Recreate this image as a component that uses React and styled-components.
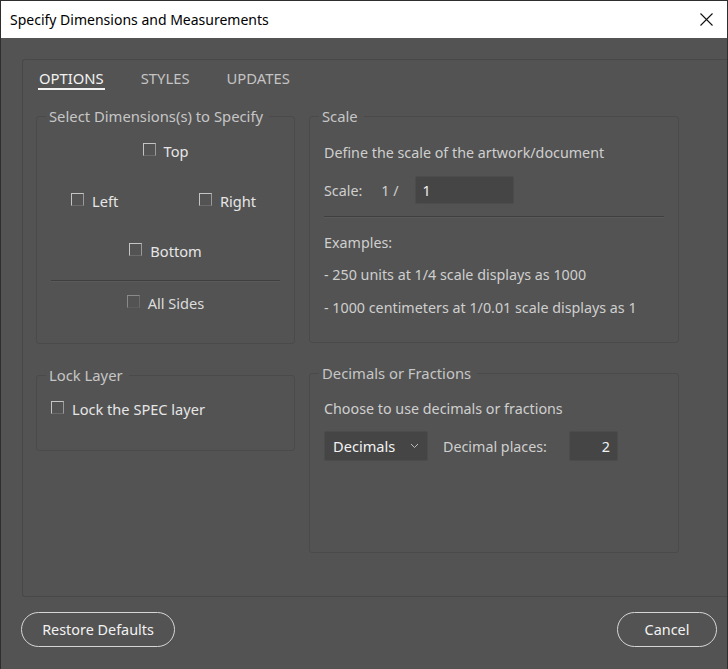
import React from 'react'
import styled, { createGlobalStyle } from 'styled-components'

const GlobalStyle = createGlobalStyle`
  html, body {
    margin: 0;
    padding: 0;
    background: #535353;
  }
  * { box-sizing: border-box; }
`

const Window = styled.div`
  width: 728px;
  height: 669px;
  display: flex;
  flex-direction: column;
  background: #535353;
  border: 1px solid #2e2e2e;
  border-bottom: none;
  font-family: "Noto Sans", "Open Sans", sans-serif;
  overflow: hidden;
`

const TitleBar = styled.div`
  height: 37px;
  flex: none;
  display: flex;
  align-items: center;
  justify-content: space-between;
  background: #ffffff;
  padding: 0 14px 0 9px;
`

const Title = styled.div`
  font-size: 14px;
  color: #000;
`

const Body = styled.div`
  flex: 1;
  display: flex;
  flex-direction: column;
  padding-top: 21px;
`

const Panel = styled.div`
  flex: 1;
  margin-left: 21px;
  border: 1px solid #484848;
  border-right: none;
  border-radius: 3px 0 0 3px;
  padding: 0 0 0 13px;
  display: flex;
  flex-direction: column;
`

const Tabs = styled.div`
  display: flex;
  gap: 35px;
  height: 30px;
  padding-left: 2px;
`

const Tab = styled.div`
  font-size: 14.8px;
  padding: 8px 1px 0;
  color: ${p => (p.$active ? '#f2f2f2' : '#c4c4c4')};
  border-bottom: 2px solid ${p => (p.$active ? '#f2f2f2' : 'transparent')};
`

const Columns = styled.div`
  display: grid;
  grid-template-columns: 259px 370px;
  column-gap: 14px;
  margin-top: 16px;
  align-items: start;
`

const Column = styled.div`
  display: flex;
  flex-direction: column;
  gap: ${p => p.$gap}px;
`

const Group = styled.fieldset`
  margin: 0;
  min-width: 0;
  border: 1px solid #4a4a4a;
  border-radius: 3px;
  padding: 0 14px ${p => p.$bottom}px 14px;
`

const Legend = styled.legend`
  font-size: 14.8px;
  line-height: 20px;
  color: #c6c6c6;
  padding: 0 6px 0 3px;
  margin-left: -5px;
`

const CheckRow = styled.div`
  display: flex;
  justify-content: ${p => p.$justify || 'center'};
  height: 24px;
  align-items: center;
  margin-top: ${p => p.$top}px;
  padding: ${p => p.$pad || '0'};
`

const Check = styled.label`
  display: flex;
  align-items: center;
  gap: 8px;
  font-size: 14.6px;
  color: ${p => (p.$dim ? '#dcdcdc' : '#e6e6e6')};
`

const Box = styled.span`
  width: 13px;
  height: 13px;
  border: 1px solid;
  border-color: ${p =>
    p.$dim ? '#8a8a8a #6a6a6a #5c5c5c #8a8a8a' : '#c4c4c4 #9a9a9a #6a6a6a #c4c4c4'};
  margin-top: -4px;
`

const Rule = styled.div`
  height: 2px;
  background: #3f3f3f;
  border-bottom: 1px solid #5a5a5a;
  margin-top: ${p => p.$top}px;
`

const Text = styled.div`
  font-size: 14.3px;
  line-height: 20px;
  color: #cfcfcf;
  margin-top: ${p => p.$top}px;
`

const FieldRow = styled.div`
  display: flex;
  align-items: center;
  height: ${p => p.$h}px;
  margin-top: ${p => p.$top}px;
`

const Label = styled.span`
  font-size: 14.3px;
  color: #cfcfcf;
  margin-right: ${p => p.$gap}px;
`

const Input = styled.div`
  width: ${p => p.$w}px;
  height: 100%;
  background: #454545;
  border: 1px solid #4c4c4c;
  border-radius: 2px;
  display: flex;
  align-items: center;
  justify-content: ${p => (p.$right ? 'flex-end' : 'flex-start')};
  padding: 0 7px;
  font-size: 14.3px;
  color: #f2f2f2;
`

const Select = styled.div`
  width: 104px;
  height: 100%;
  background: #454545;
  border: 1px solid #4c4c4c;
  border-radius: 2px;
  display: flex;
  align-items: center;
  justify-content: space-between;
  padding: 0 8px 0 8px;
  margin-right: 15px;
  font-size: 14.6px;
  color: #f2f2f2;
`

const Footer = styled.div`
  height: 72px;
  flex: none;
  display: flex;
  justify-content: space-between;
  align-items: flex-start;
  padding: 15px 10px 0 20px;
`

const Button = styled.button`
  height: 35px;
  width: ${p => p.$w}px;
  border: 1px solid #d6d6d6;
  border-radius: 18px;
  background: transparent;
  color: #f2f2f2;
  font-family: inherit;
  font-size: 14.4px;
  padding: 0;
`

const Chevron = () => (
  <svg width="9" height="6" viewBox="0 0 9 6">
    <path d="M1 1 L4.5 4.5 L8 1" fill="none" stroke="#bdbdbd" strokeWidth="1" />
  </svg>
)

const CloseIcon = () => (
  <svg width="13" height="13" viewBox="0 0 13 13">
    <path d="M0.5 0.5 L12.5 12.5 M12.5 0.5 L0.5 12.5" stroke="#111" strokeWidth="1.1" />
  </svg>
)

const CheckItem = ({ children, dim }) => (
  <Check $dim={dim}>
    <Box $dim={dim} />
    {children}
  </Check>
)

export default function App() {
  return (
    <>
      <GlobalStyle />
      <Window>
        <TitleBar>
          <Title>Specify Dimensions and Measurements</Title>
          <CloseIcon />
        </TitleBar>
        <Body>
          <Panel>
            <Tabs>
              <Tab $active>OPTIONS</Tab>
              <Tab>STYLES</Tab>
              <Tab>UPDATES</Tab>
            </Tabs>
            <Columns>
              <Column $gap={21}>
                <Group $bottom={28}>
                  <Legend>Select Dimensions(s) to Specify</Legend>
                  <CheckRow $top={13}>
                    <CheckItem>Top</CheckItem>
                  </CheckRow>
                  <CheckRow $top={26} $justify="space-between" $pad="0 24px 0 20px">
                    <CheckItem>Left</CheckItem>
                    <CheckItem>Right</CheckItem>
                  </CheckRow>
                  <CheckRow $top={26}>
                    <CheckItem>Bottom</CheckItem>
                  </CheckRow>
                  <Rule $top={17} />
                  <CheckRow $top={9}>
                    <CheckItem dim>All Sides</CheckItem>
                  </CheckRow>
                </Group>
                <Group $bottom={29}>
                  <Legend>Lock Layer</Legend>
                  <CheckRow $top={12} $justify="flex-start">
                    <CheckItem>Lock the SPEC layer</CheckItem>
                  </CheckRow>
                </Group>
              </Column>
              <Column $gap={20}>
                <Group $bottom={24}>
                  <Legend>Scale</Legend>
                  <Text $top={17}>Define the scale of the artwork/document</Text>
                  <FieldRow $h={28} $top={13}>
                    <Label $gap={19}>Scale:</Label>
                    <Label $gap={16}>1 /</Label>
                    <Input $w={99}>1</Input>
                  </FieldRow>
                  <Rule $top={12} />
                  <Text $top={15}>Examples:</Text>
                  <Text $top={12}>- 250 units at 1/4 scale displays as 1000</Text>
                  <Text $top={13}>- 1000 centimeters at 1/0.01 scale displays as 1</Text>
                </Group>
                <Group $bottom={91}>
                  <Legend>Decimals or Fractions</Legend>
                  <Text $top={16}>Choose to use decimals or fractions</Text>
                  <FieldRow $h={30} $top={12}>
                    <Select>
                      Decimals
                      <Chevron />
                    </Select>
                    <Label $gap={22}>Decimal places:</Label>
                    <Input $w={49} $right>2</Input>
                  </FieldRow>
                </Group>
              </Column>
            </Columns>
          </Panel>
          <Footer>
            <Button $w={154}>Restore Defaults</Button>
            <Button $w={100}>Cancel</Button>
          </Footer>
        </Body>
      </Window>
    </>
  )
}
